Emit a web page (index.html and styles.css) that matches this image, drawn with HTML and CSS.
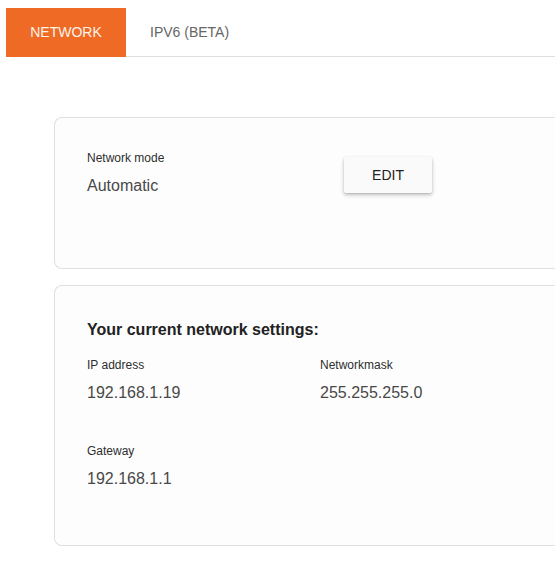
FILE: index.html
```html
<!DOCTYPE html>
<html>
<head>
<meta charset="utf-8">
<link rel="stylesheet" href="styles.css">
</head>
<body>
<div class="tabs">
  <div class="tab active">NETWORK</div>
  <div class="tab">IPV6 (BETA)</div>
  <div class="tab-fill"></div>
</div>
<main class="content">
  <section class="card card-mode">
    <div class="mode-row">
      <div class="field field-mode">
        <div class="label">Network mode</div>
        <div class="value">Automatic</div>
      </div>
      <button class="btn">EDIT</button>
    </div>
  </section>
  <section class="card card-settings">
    <h2 class="title">Your current network settings:</h2>
    <div class="grid">
      <div class="field">
        <div class="label">IP address</div>
        <div class="value">192.168.1.19</div>
      </div>
      <div class="field">
        <div class="label">Networkmask</div>
        <div class="value">255.255.255.0</div>
      </div>
      <div class="field">
        <div class="label">Gateway</div>
        <div class="value">192.168.1.1</div>
      </div>
    </div>
  </section>
</main>
</body>
</html>
```

FILE: styles.css
```css
html, body {
  margin: 0;
  padding: 0;
  background: #fff;
  overflow: hidden;
}
body {
  font-family: "Liberation Sans", Arial, sans-serif;
  width: 555px;
  height: 562px;
}
.tabs {
  display: flex;
  padding: 8px 0 0 6px;
}
.tab {
  box-sizing: border-box;
  border-bottom: 1px solid #dedede;
  display: flex;
  align-items: center;
  justify-content: center;
  font-size: 14px;
  color: #666;
  padding: 0 24px;
  height: 49px;
}
.tab.active {
  width: 120px;
  padding: 0;
  background: #ee6a25;
  color: #fdf3ea;
  border-bottom-color: #ee6a25;
}
.tab-fill {
  flex: 1;
  border-bottom: 1px solid #dedede;
}
.content {
  padding: 60px 0 0 54px;
  display: flex;
  flex-direction: column;
  gap: 16px;
  overflow: hidden;
}
.card {
  box-sizing: border-box;
  width: 520px;
  margin-right: -20px;
  border: 1px solid #e0e0e0;
  border-right: none;
  border-radius: 8px 0 0 8px;
  background: #fdfdfd;
  padding: 32px 32px 0 32px;
}
.card-mode {
  height: 152px;
}
.card-settings {
  height: 261px;
}
.mode-row {
  display: flex;
  align-items: center;
}
.field-mode {
  width: 257px;
}
.label {
  font-size: 12px;
  line-height: 16px;
  color: #2e2e2e;
}
.value {
  font-size: 16px;
  line-height: 24px;
  color: #484848;
  margin-top: 8px;
}
.btn {
  font-family: "Liberation Sans", Arial, sans-serif;
  width: 88px;
  height: 36px;
  border: none;
  border-radius: 2px;
  background: #fafafa;
  color: #222;
  font-size: 14px;
  box-shadow: 0 2px 4px rgba(0,0,0,0.22), 0 1px 2px rgba(0,0,0,0.12);
  margin-top: 2px;
}
.title {
  margin: 0;
  font-size: 16px;
  line-height: 24px;
  font-weight: bold;
  color: #222;
}
.grid {
  display: grid;
  grid-template-columns: 233px 233px;
  row-gap: 38px;
  margin-top: 15px;
}
```
